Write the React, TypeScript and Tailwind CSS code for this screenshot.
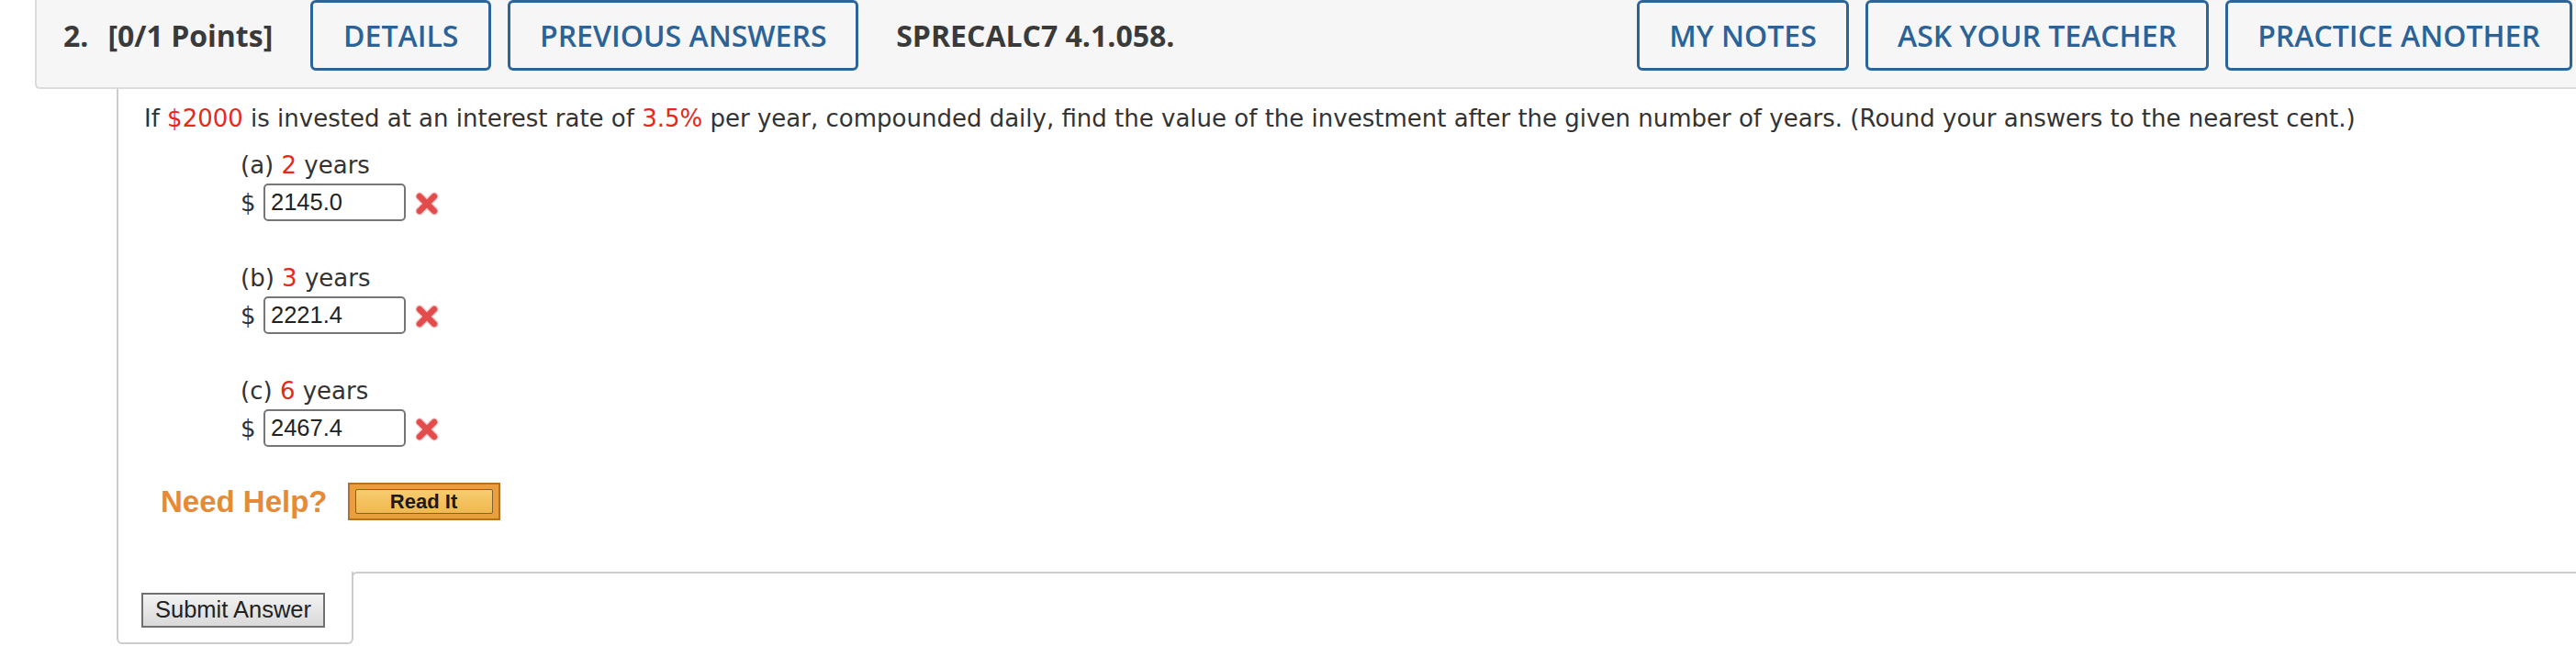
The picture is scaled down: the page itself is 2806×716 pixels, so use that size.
import React from "react";

function RedX() {
  return (
    <svg width="28" height="26" viewBox="0 0 28 26" className="shrink-0">
      <g stroke="#f29a9a" strokeWidth="9" strokeLinecap="round" opacity="0.55">
        <line x1="6" y1="5" x2="22" y2="21" />
        <line x1="22" y1="5" x2="6" y2="21" />
      </g>
      <g stroke="#e24c4c" strokeWidth="6.5" strokeLinecap="round">
        <line x1="6" y1="5" x2="22" y2="21" />
        <line x1="22" y1="5" x2="6" y2="21" />
      </g>
    </svg>
  );
}

function HeaderButton({ label, w }: { label: string; w: string }) {
  return (
    <div
      className={`${w} h-[77px] shrink-0 flex items-center justify-center border-[3px] border-[#2b6499] rounded-[6px] text-[#2b6398] font-semibold text-[32px] font-['Open_Sans',sans-serif] whitespace-nowrap`}
    >
      {label}
    </div>
  );
}

function Part({ letter, years, value }: { letter: string; years: string; value: string }) {
  return (
    <div className="flex flex-col">
      <div className="h-[32px] leading-[32px] text-[26px] text-[#333] font-['DejaVu_Sans',Verdana,sans-serif] whitespace-nowrap">
        ({letter}) <span className="text-[#e5291d]">{years}</span> years
      </div>
      <div className="mt-[4px] flex items-center h-[41px]">
        <span className="w-[25px] text-[26px] text-[#333] font-['DejaVu_Sans',Verdana,sans-serif] leading-none">$</span>
        <div className="w-[155px] h-[41px] border-2 border-[#767676] rounded-[5px] bg-white flex items-center pl-[6px] text-[25.5px] text-[#222] font-['Liberation_Sans',Arial,sans-serif]">
          {value}
        </div>
        <div className="ml-[9px] mt-[3px]">
          <RedX />
        </div>
      </div>
    </div>
  );
}

export default function App() {
  return (
    <div className="w-[2806px] h-[716px] overflow-hidden bg-white pl-[38px]">
      {/* Header */}
      <div className="h-[97px] flex items-start bg-[#f6f6f6] border-l-2 border-b-2 border-[#dcdcdc] rounded-bl-[5px] pl-[29px] pr-[4px]">
        <div className="h-[77px] flex items-center font-['Open_Sans',sans-serif] font-bold text-[32px] text-[#3a3a3a] whitespace-nowrap">
          <span>2.</span>
          <span className="ml-[21px]">[0/1 Points]</span>
        </div>
        <div className="ml-[41px] flex gap-[18px]">
          <HeaderButton label="DETAILS" w="w-[197px]" />
          <HeaderButton label="PREVIOUS ANSWERS" w="w-[382px]" />
        </div>
        <div className="ml-[41px] h-[77px] flex items-center font-['Open_Sans',sans-serif] font-bold text-[32px] text-[#3a3a3a] whitespace-nowrap">
          SPRECALC7 4.1.058.
        </div>
        <div className="flex-1" />
        <div className="flex gap-[18px]">
          <HeaderButton label="MY NOTES" w="w-[231px]" />
          <HeaderButton label="ASK YOUR TEACHER" w="w-[374px]" />
          <HeaderButton label="PRACTICE ANOTHER" w="w-[378px]" />
        </div>
      </div>

      {/* Content */}
      <div className="ml-[89px] border-l-2 border-[#cccccc] pl-[28px] pt-[16px] pb-[51px]">
        <div className="h-[32px] leading-[32px] text-[26px] text-[#333] font-['DejaVu_Sans',Verdana,sans-serif] whitespace-nowrap">
          If <span className="text-[#e5291d]">$2000</span> is invested at an interest rate of{" "}
          <span className="text-[#e5291d]">3.5%</span> per year, compounded daily, find the value of the investment after the given number of years. (Round your answers to the nearest cent.)
        </div>
        <div className="ml-[105px] mt-[19px] flex flex-col gap-[46px]">
          <Part letter="a" years="2" value="2145.0" />
          <Part letter="b" years="3" value="2221.4" />
          <Part letter="c" years="6" value="2467.4" />
        </div>
        <div className="mt-[35px] ml-[18px] flex items-center">
          <span className="font-['Liberation_Sans',Arial,sans-serif] font-bold text-[33px] text-[#e68a35] whitespace-nowrap">
            Need Help?
          </span>
          <div className="ml-[22px] w-[166px] h-[41px] border-2 border-[#b0712a] bg-[#eb9d3f] px-[6px] py-[5px]">
            <div className="w-full h-full border border-[#7f6134] rounded-[2px] bg-gradient-to-b from-[#f7cc6e] to-[#f0b84f] flex items-center justify-center font-['Liberation_Sans',Arial,sans-serif] font-bold text-[22px] text-[#1a1a1a]">
              Read It
            </div>
          </div>
        </div>
      </div>

      {/* Bottom */}
      <div className="ml-[89px] flex items-start">
        <div className="w-[258px] border-l-2 border-b-2 border-r-2 border-[#cccccc] rounded-b-[6px] pl-[25px] pt-[23px] pb-[16px]">
          <div className="w-[200px] h-[38px] border-2 border-[#707070] bg-gradient-to-b from-[#f3f3f3] to-[#d9d9d9] flex items-center justify-center font-['Liberation_Sans',Arial,sans-serif] text-[25.5px] text-[#222]">
            Submit Answer
          </div>
        </div>
        <div className="flex-1 -ml-[2px] h-[12px] border-t-2 border-l-2 border-[#cccccc] rounded-tl-[6px]" />
      </div>
    </div>
  );
}
